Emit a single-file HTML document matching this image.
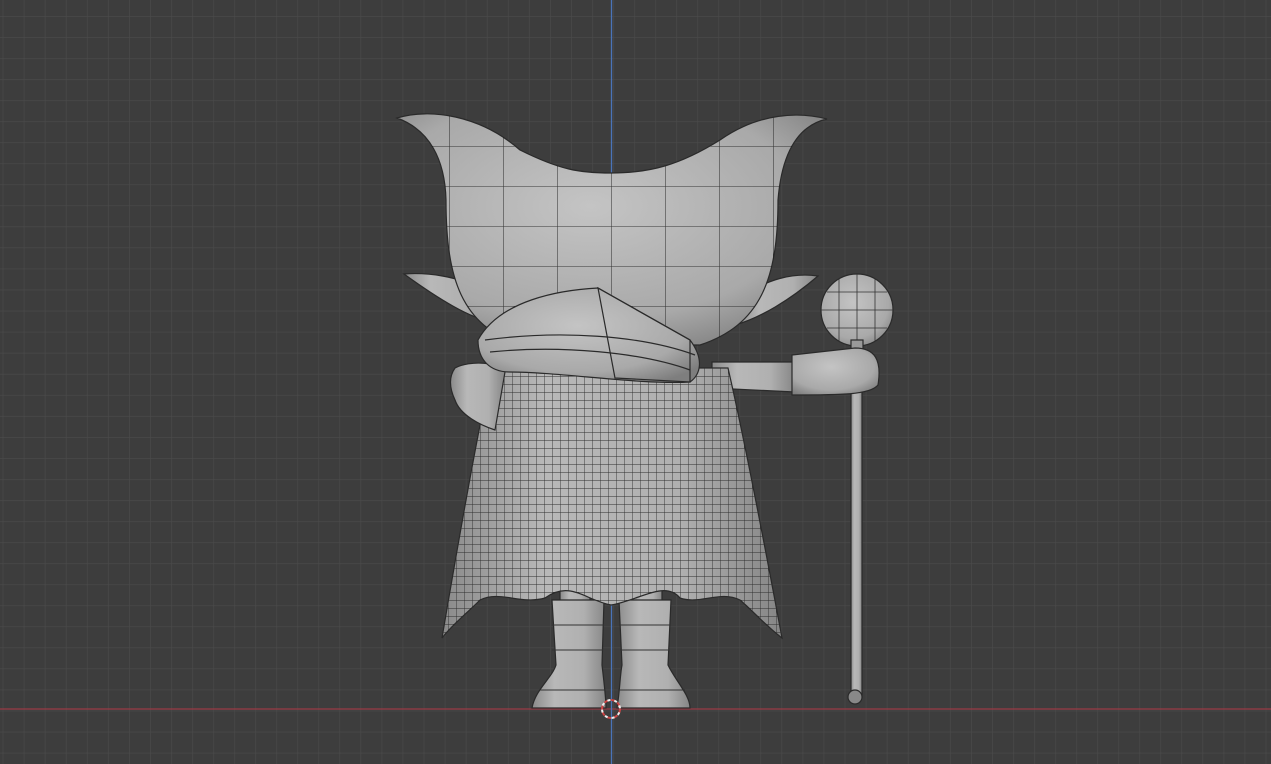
<!DOCTYPE html>
<html><head><meta charset="utf-8"><style>
html,body{margin:0;padding:0;background:#3d3d3d;overflow:hidden}
svg{display:block}
</style></head><body>
<svg width="1271" height="764" viewBox="0 0 1271 764" xmlns="http://www.w3.org/2000/svg">
<defs>
<pattern id="g" x="2.7" y="16" width="21.05" height="21.05" patternUnits="userSpaceOnUse">
<path d="M0 0V21.05M0 0H21.05" stroke="#4b4b4b" stroke-width="1.2" fill="none"/>
</pattern>
<radialGradient id="sh" cx="0.45" cy="0.4" r="0.7">
<stop offset="0" stop-color="#c4c4c4"/><stop offset="0.7" stop-color="#a9a9a9"/><stop offset="1" stop-color="#7e7e7e"/>
</radialGradient>
<linearGradient id="hg" x1="0" x2="1">
<stop offset="0" stop-color="#8a8a8a"/><stop offset="0.3" stop-color="#b8b8b8"/><stop offset="0.7" stop-color="#b0b0b0"/><stop offset="1" stop-color="#858585"/>
</linearGradient>
<pattern id="w" width="8" height="8" patternUnits="userSpaceOnUse">
<path d="M0 0V8M0 0H8" stroke="#2e2e2e" stroke-width="0.9" fill="none"/>
</pattern>
<pattern id="w2" width="54" height="40" patternUnits="userSpaceOnUse" x="611" y="146">
<path d="M0 0V40M0 0H54" stroke="#1e1e1e" stroke-width="1.1" fill="none"/>
</pattern>
</defs>
<rect width="1271" height="764" fill="#3d3d3d"/>
<rect width="1271" height="764" fill="url(#g)"/>
<line x1="0" y1="709" x2="1271" y2="709" stroke="#9a3b45" stroke-width="1.3"/>
<line x1="611.5" y1="0" x2="611.5" y2="764" stroke="#4a74b8" stroke-width="1.3"/>

<g stroke="#2a2a2a" stroke-width="1.2">
<path d="M404,274 C430,272 460,278 470,285 L492,322 C470,318 440,300 404,274 Z" fill="url(#hg)"/>
<path d="M818,276 C790,272 765,282 755,290 L735,325 C760,318 790,300 818,276 Z" fill="url(#hg)"/>
<rect x="851" y="345" width="11" height="352" fill="url(#hg)"/>
<circle cx="855" cy="697" r="7" fill="#888"/>
<circle cx="857" cy="310" r="36" fill="url(#sh)"/>
<path d="M821,310 H893 M857,274 V346 M827,292 H887 M827,328 H887 M839,278 V342 M875,278 V342" stroke="#333" fill="none" stroke-width="0.8"/>
<rect x="851" y="340" width="12" height="12" fill="#999"/>
<path d="M712,362 L795,362 L795,392 L712,388 Z" fill="url(#hg)"/>
<path d="M792,355 L855,348 C875,348 882,360 878,385 C870,395 840,395 792,395 Z" fill="url(#sh)"/>
<rect x="560" y="565" width="30" height="45" fill="url(#hg)"/>
<rect x="632" y="565" width="30" height="45" fill="url(#hg)"/>
<path d="M552,600 L604,600 L602,665 C605,690 606,700 606,708 L532,708 C535,690 552,678 556,665 Z" fill="url(#hg)"/>
<path d="M619,600 L671,600 L668,665 C675,680 690,695 690,708 L617,708 C620,690 620,675 622,665 Z" fill="url(#hg)"/>
<path d="M552,625 H604 M552,650 H603 M619,625 H670 M620,650 H668 M540,690 H605 M618,690 H685" stroke="#333" fill="none" stroke-width="0.9"/>
<path d="M492,368 L728,368 C740,420 760,520 782,638 C765,625 752,610 740,600 C720,590 700,605 680,598 C665,580 640,600 611,605 C585,600 570,580 545,598 C520,605 500,590 480,600 C465,615 452,625 442,638 C462,520 480,420 492,368 Z" fill="url(#hg)"/>
<path d="M492,368 L728,368 C740,420 760,520 782,638 C765,625 752,610 740,600 C720,590 700,605 680,598 C665,580 640,600 611,605 C585,600 570,580 545,598 C520,605 500,590 480,600 C465,615 452,625 442,638 C462,520 480,420 492,368 Z" fill="url(#w)" stroke="none"/>
<path d="M455,368 C470,360 500,362 505,372 L495,430 C480,425 460,415 455,400 C448,385 450,375 455,368 Z" fill="url(#hg)"/>
<path d="M397,118 C430,108 480,115 520,150 C560,170 580,173 611,173 C650,173 680,165 720,140 C760,112 800,112 827,119 C800,125 782,150 778,200 C778,280 760,325 700,345 L520,345 C462,325 446,280 446,200 C445,160 430,130 397,118 Z" fill="url(#sh)"/>
<path d="M397,118 C430,108 480,115 520,150 C560,170 580,173 611,173 C650,173 680,165 720,140 C760,112 800,112 827,119 C800,125 782,150 778,200 C778,280 760,325 700,345 L520,345 C462,325 446,280 446,200 C445,160 430,130 397,118 Z" fill="url(#w2)" stroke="none" opacity="0.85"/>
<path d="M478,340 C500,300 560,290 598,288 L690,340 C705,360 700,375 690,382 C640,385 560,372 510,372 C490,372 478,360 478,340 Z" fill="url(#sh)"/>
<path d="M490,352 C560,345 640,352 690,370 M485,340 C560,330 640,335 695,355" fill="none"/>
<path d="M598,288 L690,340 L690,382 L615,378 Z" fill="none"/>
</g>
<circle cx="611" cy="709" r="9" fill="none" stroke="#c44" stroke-width="2" stroke-dasharray="4 3"/>
<circle cx="611" cy="709" r="9" fill="none" stroke="#eee" stroke-width="2" stroke-dasharray="3 4" stroke-dashoffset="3.5"/>
</svg>
</body></html>
